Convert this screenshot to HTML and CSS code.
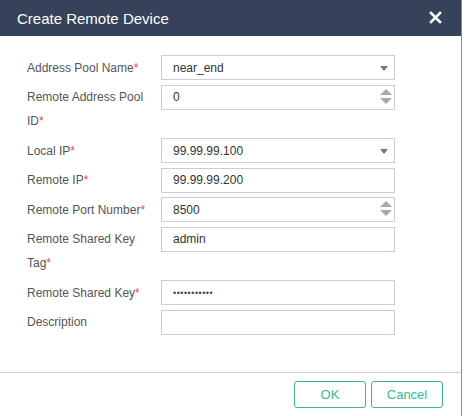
FILE: index.html
```html
<!DOCTYPE html>
<html lang="en">
<head>
    <meta charset="UTF-8">
    <title>Create Remote Device</title>
    <link rel="stylesheet" href="styles.css">
</head>
<body>
    <div class="dialog">
        <div class="dialog-head">
            <span class="dialog-title">Create Remote Device</span>
            <svg class="close" width="13" height="13" viewBox="0 0 13 13">
                <path d="M2 2 L11 11 M11 2 L2 11" stroke="#fff" stroke-width="2.6" stroke-linecap="square"/>
            </svg>
        </div>

        <div class="form">
            <div class="row">
                <div class="label">Address Pool Name<span class="req">*</span></div>
                <div class="field">
                    <span class="val">near_end</span>
                    <span class="arrow-down"></span>
                </div>
            </div>
            <div class="row">
                <div class="label">Remote Address Pool ID<span class="req">*</span></div>
                <div class="field">
                    <span class="val">0</span>
                    <span class="spin"><span class="up"></span><span class="down"></span></span>
                </div>
            </div>
            <div class="row">
                <div class="label">Local IP<span class="req">*</span></div>
                <div class="field">
                    <span class="val">99.99.99.100</span>
                    <span class="arrow-down"></span>
                </div>
            </div>
            <div class="row">
                <div class="label">Remote IP<span class="req">*</span></div>
                <div class="field"><span class="val">99.99.99.200</span></div>
            </div>
            <div class="row">
                <div class="label">Remote Port Number<span class="req">*</span></div>
                <div class="field">
                    <span class="val">8500</span>
                    <span class="spin"><span class="up"></span><span class="down"></span></span>
                </div>
            </div>
            <div class="row">
                <div class="label">Remote Shared Key Tag<span class="req">*</span></div>
                <div class="field"><span class="val">admin</span></div>
            </div>
            <div class="row">
                <div class="label">Remote Shared Key<span class="req">*</span></div>
                <div class="field"><span class="val dots">&bull;&bull;&bull;&bull;&bull;&bull;&bull;&bull;&bull;&bull;&bull;</span></div>
            </div>
            <div class="row">
                <div class="label">Description</div>
                <div class="field"></div>
            </div>
        </div>

        <div class="dialog-foot">
            <button class="btn">OK</button>
            <button class="btn">Cancel</button>
        </div>
    </div>
</body>
</html>
```

FILE: styles.css
```css
body {
    margin: 0;
    background-color: #fff;
    font-family: "Liberation Sans", Arial, sans-serif;
}

.dialog {
    width: 461px;
    height: 416px;
    border-right: 1px solid #8a8a8a;
    background-color: #fff;
}

.dialog-head {
    height: 36px;
    background-color: #36425a;
    display: flex;
    align-items: center;
    justify-content: space-between;
    padding: 0 19px 0 17px;
}

.dialog-title {
    color: #fff;
    font-size: 15px;
}

.close {
    display: block;
    margin-top: -1px;
}

.form {
    padding: 19px 0 0 27px;
    height: 317px;
    border-bottom: 1px solid #cfcce0;
}

.row {
    display: flex;
    align-items: flex-start;
    margin-bottom: 4.5px;
}

.label {
    width: 124px;
    margin-right: 10px;
    font-size: 12px;
    line-height: 24px;
    padding-top: 0.5px;
    margin-bottom: 0.5px;
    color: #555;
}

.req {
    color: #e8454f;
}

.field {
    position: relative;
    width: 221px;
    height: 23px;
    border: 1px solid #cccbdb;
    display: flex;
    align-items: center;
    padding-left: 11px;
    box-sizing: content-box;
    font-size: 12px;
    color: #333;
}

.dots {
    font-size: 9px;
    letter-spacing: 0.5px;
    color: #444;
}

.arrow-down {
    position: absolute;
    right: 6px;
    top: 10px;
    width: 0;
    height: 0;
    border-left: 4px solid transparent;
    border-right: 4px solid transparent;
    border-top: 5px solid #6f7785;
}

.spin {
    position: absolute;
    right: 2px;
    top: 3px;
    display: flex;
    flex-direction: column;
    gap: 3px;
}

.spin .up {
    width: 0;
    height: 0;
    border-left: 6px solid transparent;
    border-right: 6px solid transparent;
    border-bottom: 6px solid #a9a9ad;
}

.spin .down {
    width: 0;
    height: 0;
    border-left: 6px solid transparent;
    border-right: 6px solid transparent;
    border-top: 6px solid #a9a9ad;
}

.dialog-foot {
    display: flex;
    justify-content: flex-end;
    gap: 5px;
    padding: 8px 18px 0 0;
}

.btn {
    width: 72px;
    height: 27px;
    border: 1px solid #3bb88a;
    border-radius: 3px;
    background-color: #fff;
    color: #3bb88a;
    font-family: "Liberation Sans", Arial, sans-serif;
    font-size: 13px;
    padding: 0;
}
```
